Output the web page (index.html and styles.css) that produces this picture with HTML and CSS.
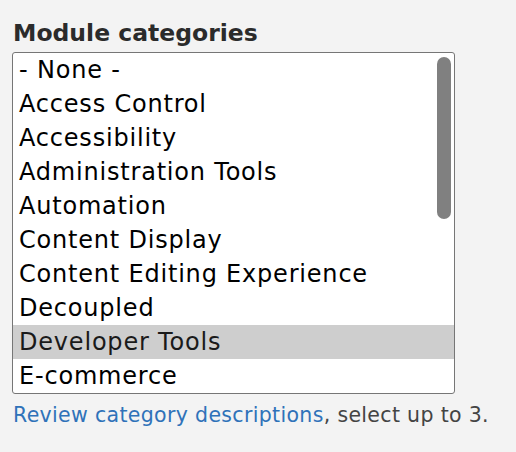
FILE: index.html
```html
<!DOCTYPE html>
<html>
<head>
<meta charset="utf-8">
<link rel="stylesheet" href="styles.css">
</head>
<body>
<div class="field">
  <label class="label">Module categories</label>
  <div class="listwrap">
    <div class="listbox">
      <div class="opt">- None -</div>
      <div class="opt">Access Control</div>
      <div class="opt">Accessibility</div>
      <div class="opt">Administration Tools</div>
      <div class="opt">Automation</div>
      <div class="opt">Content Display</div>
      <div class="opt">Content Editing Experience</div>
      <div class="opt">Decoupled</div>
      <div class="opt selected">Developer Tools</div>
      <div class="opt">E-commerce</div>
      <div class="opt">Integrations</div>
      <div class="opt">Media</div>
      <div class="opt">Multilingual</div>
      <div class="opt">Performance</div>
      <div class="opt">Search Engine Optimization (SEO)</div>
      <div class="opt">Security</div>
      <div class="opt">Site Search</div>
      <div class="opt">Site Structure</div>
      <div class="opt">Spam Prevention</div>
      <div class="opt">User Engagement</div>
      <div class="opt">Utility</div>
    </div>
    <div class="thumb"></div>
  </div>
  <div class="help"><a class="link" href="#">Review category descriptions</a>, select up to 3.</div>
</div>
</body>
</html>
```
FILE: styles.css
```css
html, body {
  margin: 0;
  padding: 0;
  background: #f3f3f3;
}
body {
  font-family: "DejaVu Sans", "Noto Sans", sans-serif;
  padding: 18px 12px 0 12px;
}
.field {
  display: flex;
  flex-direction: column;
  width: 443px;
}
.label {
  font-size: 23.5px;
  font-weight: bold;
  color: #2b2b2b;
  line-height: 30px;
  padding-left: 1px;
  margin-bottom: 4px;
  white-space: nowrap;
}
.listwrap {
  position: relative;
}
.listbox {
  height: 340px;
  border: 1px solid #767676;
  border-radius: 3px;
  background: #fff;
  overflow: hidden;
}
.thumb {
  position: absolute;
  top: 5px;
  right: 4px;
  width: 14px;
  height: 162px;
  border-radius: 7px;
  background: #808080;
}
.opt {
  font-size: 24px;
  letter-spacing: 0.8px;
  line-height: 34px;
  height: 34px;
  padding-left: 6px;
  color: #000;
  white-space: nowrap;
}
.opt.selected {
  background: #cecece;
  color: #1a1a1a;
}
.help {
  margin-top: 8px;
  font-size: 20.5px;
  letter-spacing: 0.33px;
  line-height: 26px;
  color: #444;
  padding-left: 1px;
  white-space: nowrap;
}
.link {
  color: #2f72b9;
  text-decoration: none;
}
```
